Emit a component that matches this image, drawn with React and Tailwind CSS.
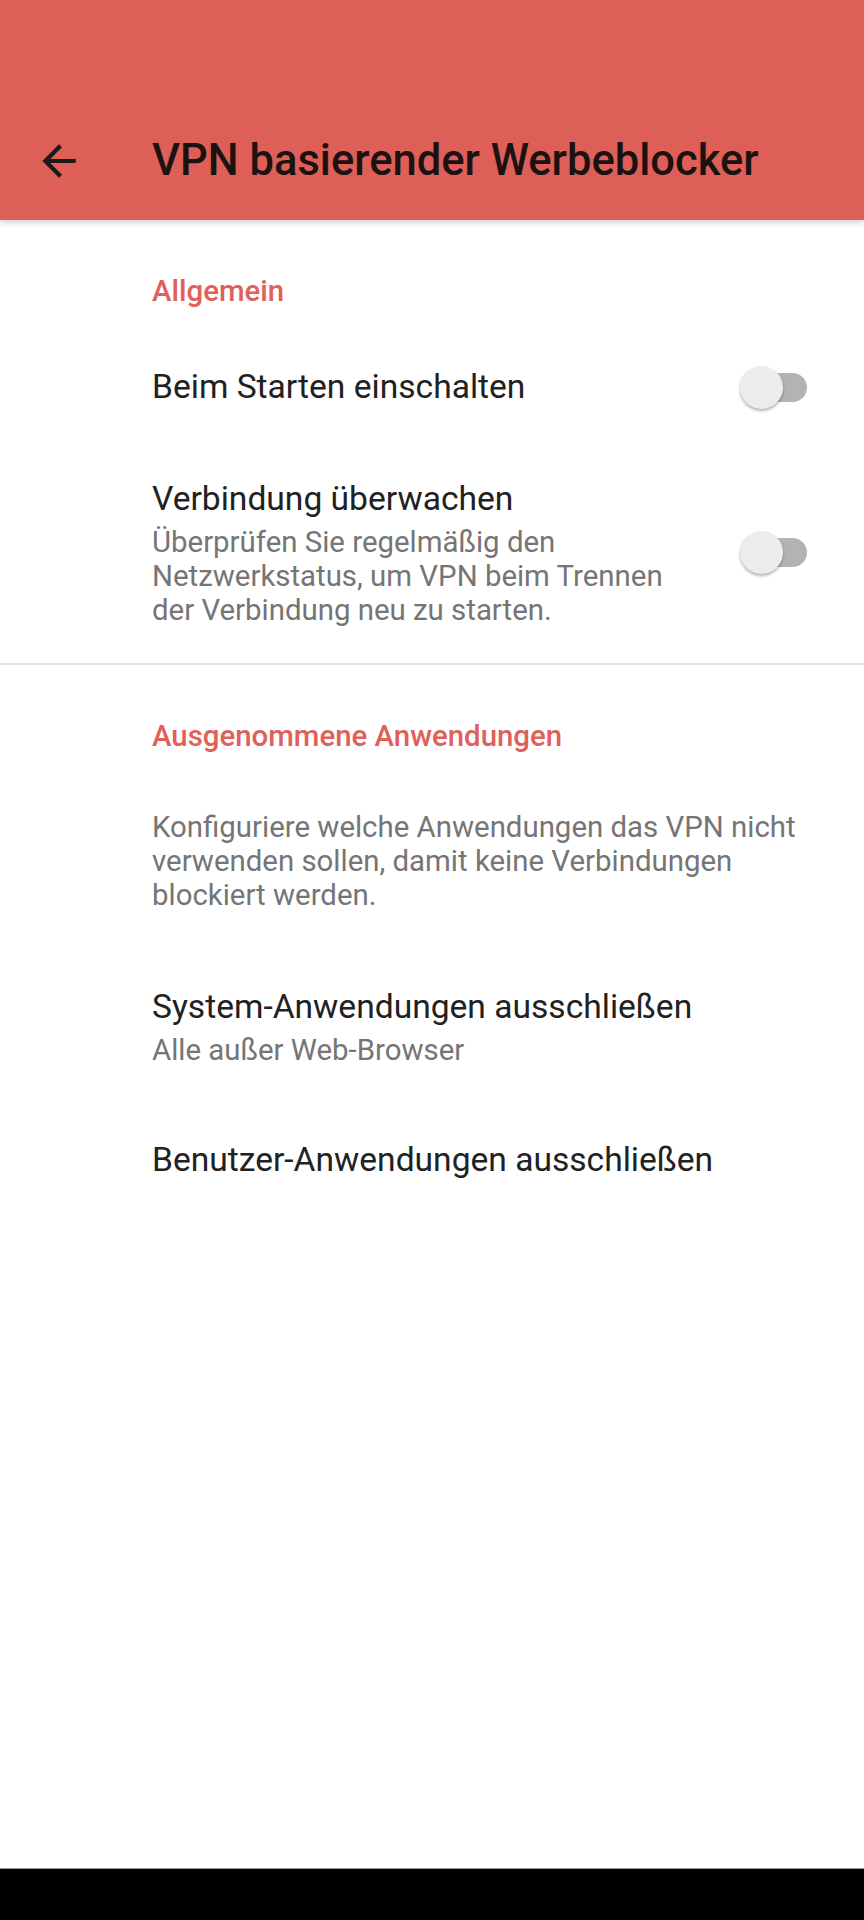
import React from "react";

const RED = "bg-[#de5f57]";

const Toggle = () => (
  <div className="relative h-[43px] w-[67px] shrink-0">
    <div className="absolute right-0 top-[7px] h-[29px] w-[58px] rounded-full bg-[#b3b3b3]" />
    <div className="absolute left-0 top-0 h-[43px] w-[43px] rounded-full bg-[#ececec] shadow-[0_2px_3px_rgba(0,0,0,0.3)]" />
  </div>
);

const Category = ({ children, className = "" }) => (
  <div className={`pl-[152px] text-[29.4px] font-medium leading-[34px] text-[#e0605a] ${className}`}>
    {children}
  </div>
);

const App = () => {
  return (
    <div
      className="flex min-h-[1920px] w-[864px] flex-col bg-white"
      style={{ fontFamily: "Roboto, 'Noto Sans', sans-serif" }}
    >
      {/* App bar */}
      <header className={`relative z-10 flex h-[220px] flex-col justify-end ${RED} shadow-[0_3px_6px_rgba(0,0,0,0.18)]`}>
        <div className="flex h-[118px] items-center">
          <div className="ml-[34px] flex h-[50px] w-[50px] items-center justify-center">
            <svg viewBox="0 0 24 24" width="50" height="50" fill="#1a1a1a">
              <path d="M20 11H7.83l5.59-5.59L12 4l-8 8 8 8 1.41-1.41L7.83 13H20v-2z" />
            </svg>
          </div>
          <h1 className="ml-[68px] text-[43.5px] font-medium leading-none text-[#1c1212]">
            VPN basierender Werbeblocker
          </h1>
        </div>
      </header>

      {/* Allgemein */}
      <Category className="pt-[54px]">Allgemein</Category>

      <div className="mt-[19px] flex h-[120px] items-center pl-[152px] pr-[57px]">
        <div className="flex-1 text-[33.6px] leading-[34px] text-[#212121]">
          Beim Starten einschalten
        </div>
        <Toggle />
      </div>

      <div className="flex items-center pb-[36px] pl-[152px] pr-[57px] pt-[35px]">
        <div className="flex-1">
          <div className="text-[33.6px] leading-[34px] text-[#212121]">
            Verbindung überwachen
          </div>
          <div className="mt-[9px] text-[29.4px] leading-[34px] text-[#757575]">
            Überprüfen Sie regelmäßig den
            <br />
            Netzwerkstatus, um VPN beim Trennen
            <br />
            der Verbindung neu zu starten.
          </div>
        </div>
        <div className="-mt-[5px]">
          <Toggle />
        </div>
      </div>

      <div className="h-[2px] bg-[#e0e0e0]" />

      {/* Ausgenommene Anwendungen */}
      <Category className="pt-[54px]">Ausgenommene Anwendungen</Category>

      <div className="mt-[57px] pl-[152px] pr-[34px] text-[29.4px] leading-[34px] text-[#757575]">
        Konfiguriere welche Anwendungen das VPN nicht
        <br />
        verwenden sollen, damit keine Verbindungen
        <br />
        blockiert werden.
      </div>

      <div className="mt-[78px] pl-[152px]">
        <div className="text-[33.6px] leading-[34px] text-[#212121]">
          System-Anwendungen ausschließen
        </div>
        <div className="mt-[9px] text-[29.4px] leading-[34px] text-[#757575]">
          Alle außer Web-Browser
        </div>
      </div>

      <div className="mt-[76px] pl-[152px] text-[33.6px] leading-[34px] text-[#212121]">
        Benutzer-Anwendungen ausschließen
      </div>

      <div className="flex-1" />

      {/* Navigation bar */}
      <div className="h-[52px] border-t border-[#9e9e9e] bg-black" />
    </div>
  );
};

export default App;
